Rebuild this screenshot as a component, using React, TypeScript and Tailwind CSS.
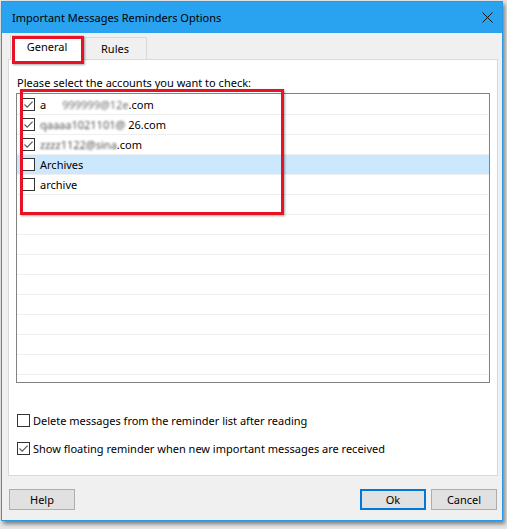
import React from 'react';

function CheckBox({ checked }: { checked?: boolean }) {
  return (
    <span className="w-[13px] h-[13px] border border-[#333333] bg-white flex items-center justify-center shrink-0">
      {checked && (
        <svg width="11" height="11" viewBox="0 0 11 11">
          <path d="M1.5 5.5 L4.2 8.2 L9.6 2.6" fill="none" stroke="#555555" strokeWidth="1.1" />
        </svg>
      )}
    </span>
  );
}

const accounts = [
  { key: 'a1', checked: true },
  { key: 'a2', checked: true },
  { key: 'a3', checked: true },
  { key: 'Archives', checked: false, selected: true },
  { key: 'archive', checked: false },
];

function AccountLabel({ id }: { id: string }) {
  // e-mail addresses are partly masked in the screenshot
  if (id === 'a1')
    return (
      <span className="flex">
        a<span className="ml-[16px] blur-[0.8px] opacity-60">999999@12e</span>.com
      </span>
    );
  if (id === 'a2')
    return (
      <span className="flex">
        <span className="blur-[0.8px] opacity-70">qaaaa1021101@</span>&nbsp;26.com
      </span>
    );
  if (id === 'a3')
    return (
      <span className="flex">
        <span className="blur-[0.8px] opacity-70">zzzz1122@sina</span>.com
      </span>
    );
  return <span>{id}</span>;
}

export default function App() {
  const rows = Array.from({ length: 14 }, (_, i) => accounts[i]);

  return (
    <div className="w-[507px] h-[529px] bg-[#e6e6e6] pt-px pl-px font-['Noto_Sans','Liberation_Sans',sans-serif] text-[11px] text-black leading-none">
      <div className="w-[502px] h-[520px] bg-[#f0f0f0] border border-[#2b98e4] flex flex-col shadow-[2px_3px_4px_rgba(0,0,0,0.45)]">
        {/* Title bar */}
        <div className="h-[31px] bg-[#29a3ef] flex items-center justify-between pl-[10px] pr-[8px] shrink-0">
          <span>Important Messages Reminders Options</span>
          <svg width="11" height="11" viewBox="0 0 11 11" className="mr-[1px]">
            <path d="M0.5 0.5 L10.5 10.5 M10.5 0.5 L0.5 10.5" stroke="#111" strokeWidth="1" />
          </svg>
        </div>

        {/* Tabs */}
        <div className="h-[26px] flex items-end pl-[8px] shrink-0">
          <div className="relative z-10 w-[74px] h-[25px] bg-white border border-[#d9d9d9] border-b-0 mb-[-1px] flex items-center justify-center pb-[3px]">
            General
            <div className="absolute left-[1px] top-0 w-[72px] h-[28px] border-[3px] border-[#e81226] shadow-[1px_1px_2px_rgba(0,0,0,0.35)]" />
          </div>
          <div className="w-[63px] h-[22px] bg-[#f0f0f0] border border-[#d9d9d9] border-l-0 border-b-0 flex items-center justify-center">
            Rules
          </div>
        </div>

        {/* Panel */}
        <div className="relative ml-[6px] w-[490px] h-[417px] bg-white border border-[#d9d9d9] pl-[7px] pt-[14px] shrink-0">
          <div className="pl-[1px] h-[16px] flex items-center">Please select the accounts you want to check:</div>

          <div className="mt-[3px] w-[474px] h-[290px] border border-[#828282] pt-px overflow-hidden">
            {rows.map((r, i) => (
              <div
                key={i}
                className={`h-[20px] border-b border-[#efefef] flex items-center pl-[5px] gap-[5px] ${r?.selected ? 'bg-[#cce8ff]' : ''}`}
              >
                {r && (
                  <>
                    <CheckBox checked={r.checked} />
                    <AccountLabel id={r.key} />
                  </>
                )}
              </div>
            ))}
          </div>

          <div className="mt-[29px] h-[16px] flex items-center pl-[1px] gap-[3px]">
            <CheckBox />
            <span>Delete messages from the reminder list after reading</span>
          </div>
          <div className="mt-[12px] h-[16px] flex items-center pl-[1px] gap-[3px]">
            <CheckBox checked />
            <span>Show floating reminder when new important messages are received</span>
          </div>

          {/* annotation box */}
          <div className="absolute left-[11px] top-[29px] w-[264px] h-[126px] border-[3px] border-[#e81226] shadow-[1px_1px_2px_rgba(0,0,0,0.35)]" />
        </div>

        {/* Buttons */}
        <div className="mt-[13px] flex items-center pl-[7px] pr-[5px]">
          <button className="w-[66px] h-[21px] bg-[#e1e1e1] border border-[#adadad]">Help</button>
          <div className="flex-1" />
          <button className="w-[66px] h-[21px] bg-[#e1e1e1] border-2 border-[#0078d7]">Ok</button>
          <button className="ml-[5px] w-[66px] h-[21px] bg-[#e1e1e1] border border-[#adadad]">Cancel</button>
        </div>
      </div>
    </div>
  );
}
